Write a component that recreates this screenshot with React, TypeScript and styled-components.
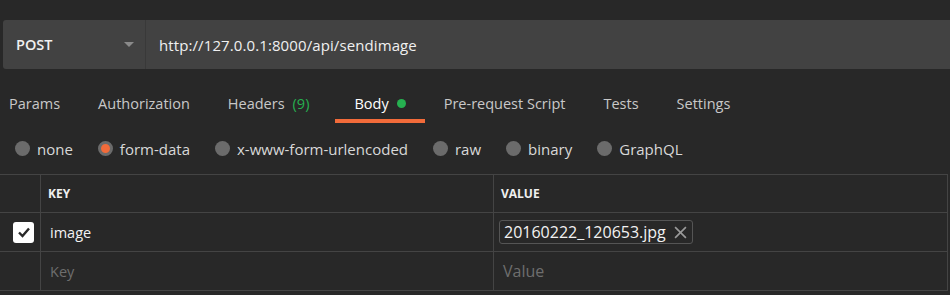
import React, { ReactElement } from "react";
import styled, { createGlobalStyle } from "styled-components";

const GlobalStyle = createGlobalStyle`
  * {
    box-sizing: border-box;
  }

  body {
    margin: 0;
    background: #282828;
    font-family: "Open Sans", "DejaVu Sans", sans-serif;
    color: #cfcfcf;
  }
`;

const Page = styled.div`
  width: 950px;
  height: 295px;
  overflow: hidden;
  padding-top: 20px;
`;

const UrlBar = styled.div`
  display: flex;
  height: 49px;
  margin-left: 3px;
  background: #424242;
  border-radius: 3px 0 0 3px;
`;

const Method = styled.div`
  display: flex;
  align-items: center;
  justify-content: space-between;
  width: 143px;
  padding: 0 11px 0 13px;
  border-right: 1px solid #393939;
  font-size: 14.5px;
  font-weight: 600;
  color: #f0f0f0;
`;

const Caret = styled.span`
  width: 0;
  height: 0;
  border-left: 5px solid transparent;
  border-right: 5px solid transparent;
  border-top: 5px solid #8a8a8a;
`;

const Url = styled.div`
  display: flex;
  align-items: center;
  padding-left: 13px;
  font-size: 15px;
  letter-spacing: 0.1px;
  color: #f0f0f0;
`;

const Tabs = styled.nav`
  display: flex;
  height: 54px;
  margin-left: -10px;
`;

const Tab = styled.div<{ $active?: boolean }>`
  display: flex;
  align-items: center;
  gap: 8px;
  padding: 14px 19px 0;
  position: relative;
  font-size: 14.5px;
  color: ${(p) => (p.$active ? "#ffffff" : "#c8c8c8")};

  ${(p) =>
    p.$active &&
    `
    margin: 0 0 0 7px;
    &::after {
      content: "";
      position: absolute;
      left: 0;
      right: 0;
      bottom: 0;
      height: 4px;
      background: #f26b3a;
    }
  `}
`;

const Count = styled.span`
  color: #26b050;
`;

const Dot = styled.span`
  width: 9px;
  height: 9px;
  border-radius: 50%;
  background: #26b050;
`;

const Radios = styled.div`
  display: flex;
  align-items: center;
  height: 51px;
  padding-left: 15px;
  gap: 25px;
`;

const Radio = styled.label`
  display: flex;
  align-items: center;
  gap: 7px;
  font-size: 15px;
  color: #d8d8d8;
`;

const Circle = styled.span<{ $checked?: boolean }>`
  width: 15px;
  height: 15px;
  border-radius: 50%;
  background: ${(p) => (p.$checked ? "#f26b3a" : "#6b6b6b")};
  border: ${(p) => (p.$checked ? "3px solid #6b6b6b" : "none")};
`;

const Table = styled.div`
  width: 948px;
  border-top: 1px solid #444;
  border-right: 1px solid #444;
`;

const Row = styled.div<{ $head?: boolean }>`
  display: grid;
  grid-template-columns: 40px 453px 1fr;
  height: ${(p) => (p.$head ? "38px" : "39px")};
  border-bottom: 1px solid #444;
`;

const Cell = styled.div<{ $first?: boolean }>`
  display: flex;
  align-items: center;
  padding-left: ${(p) => (p.$first ? "13px" : "7px")};
  border-left: ${(p) => (p.$first ? "none" : "1px solid #444")};
`;

const Head = styled.span`
  font-size: 12px;
  font-weight: 700;
  color: #f0f0f0;
`;

const Text = styled.span<{ $placeholder?: boolean; $size?: number }>`
  font-size: ${(p) => p.$size ?? 14.5}px;
  padding-left: 2px;
  color: ${(p) => (p.$placeholder ? "#6e6e6e" : "#f2f2f2")};
`;

const Check = styled.span`
  display: flex;
  align-items: center;
  justify-content: center;
  width: 21px;
  height: 21px;
  border-radius: 3px;
  background: #ffffff;
`;

const Chip = styled.span`
  display: flex;
  align-items: center;
  gap: 8px;
  height: 24px;
  margin-left: -2px;
  padding: 0 5px 0 4px;
  border: 1px solid #555;
  border-radius: 3px;
  font-size: 16px;
  color: #f2f2f2;
`;

export default function App(): ReactElement {
  const radios = ["none", "form-data", "x-www-form-urlencoded", "raw", "binary", "GraphQL"];

  return (
    <Page>
      <GlobalStyle />
      <UrlBar>
        <Method>
          POST
          <Caret />
        </Method>
        <Url>http://127.0.0.1:8000/api/sendimage</Url>
      </UrlBar>

      <Tabs>
        <Tab>Params</Tab>
        <Tab>Authorization</Tab>
        <Tab>
          Headers <Count>(9)</Count>
        </Tab>
        <Tab $active>
          Body
          <Dot />
        </Tab>
        <Tab>Pre-request Script</Tab>
        <Tab>Tests</Tab>
        <Tab>Settings</Tab>
      </Tabs>

      <Radios>
        {radios.map((r) => (
          <Radio key={r}>
            <Circle $checked={r === "form-data"} />
            {r}
          </Radio>
        ))}
      </Radios>

      <Table>
        <Row $head>
          <Cell $first />
          <Cell>
            <Head>KEY</Head>
          </Cell>
          <Cell>
            <Head>VALUE</Head>
          </Cell>
        </Row>
        <Row>
          <Cell $first>
            <Check>
              <svg width="14" height="14" viewBox="0 0 14 14">
                <path d="M2 7.5 L5.5 11 L12 3.5" fill="none" stroke="#282828" strokeWidth="2.4" />
              </svg>
            </Check>
          </Cell>
          <Cell>
            <Text>image</Text>
          </Cell>
          <Cell>
            <Chip>
              20160222_120653.jpg
              <svg width="13" height="13" viewBox="0 0 12 12">
                <path d="M1 1 L11 11 M11 1 L1 11" stroke="#9a9a9a" strokeWidth="1.5" />
              </svg>
            </Chip>
          </Cell>
        </Row>
        <Row>
          <Cell $first />
          <Cell>
            <Text $placeholder>Key</Text>
          </Cell>
          <Cell>
            <Text $placeholder $size={16}>
              Value
            </Text>
          </Cell>
        </Row>
      </Table>
    </Page>
  );
}
